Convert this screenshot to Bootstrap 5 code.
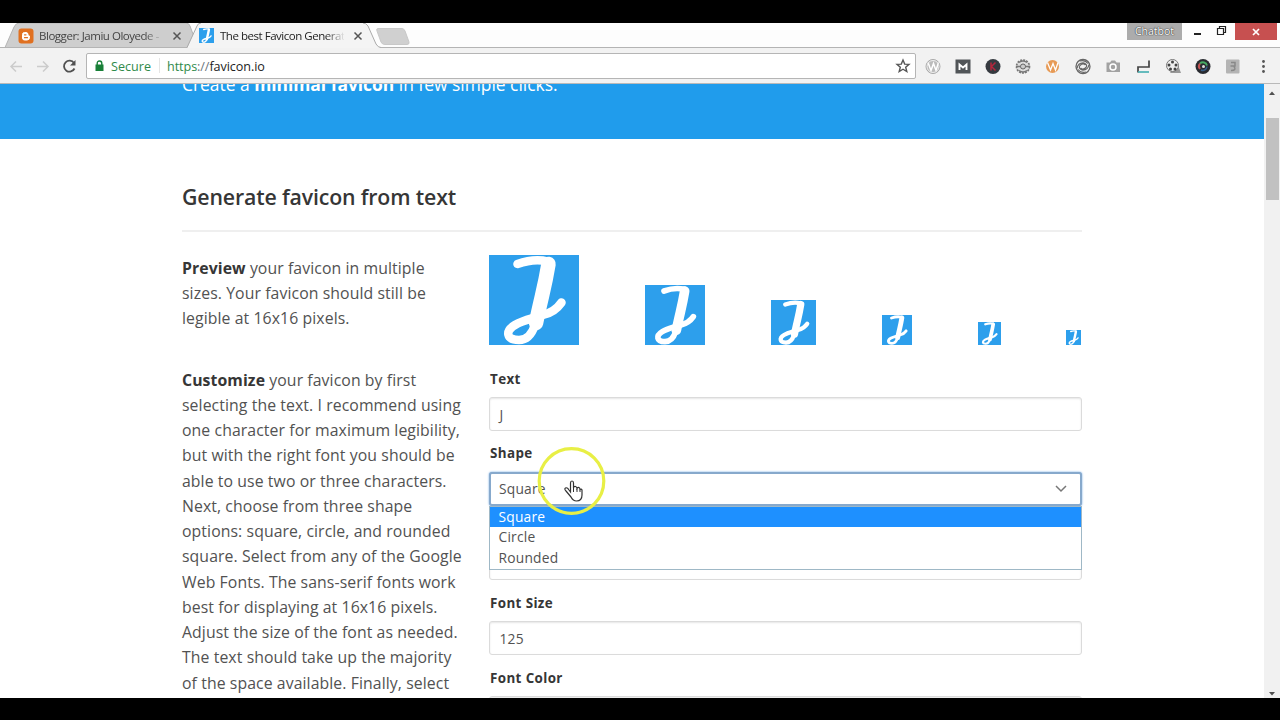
<!DOCTYPE html>
<html lang="en">
<head>
<meta charset="utf-8">
<meta name="viewport" content="width=device-width, initial-scale=1">
<title>favicon.io</title>
<link href="https://cdn.jsdelivr.net/npm/bootstrap@5.3.0/dist/css/bootstrap.min.css" rel="stylesheet">
<style>
body{height:720px;background:#000;padding:23px 0 22px;font-family:"Open Sans","Noto Sans",sans-serif;color:#525252}
.strip{height:25px;background:#fdfdfd;font-size:11.5px;color:#444}
.tabs-bg{left:0;top:0}
.tab-item{height:25px}
.t1{margin-left:18px;width:180px}
.t2{width:180px}
.tab-label{letter-spacing:-.47px;white-space:nowrap;overflow:hidden;line-height:25px;width:125px;padding-left:1px}
.t1 .tab-label{-webkit-mask-image:linear-gradient(90deg,#000 85%,transparent)}
.t2 .tab-label{-webkit-mask-image:linear-gradient(90deg,#000 85%,transparent 101%);color:#222}
.userchip{width:55px;height:17px;background:#acacac;color:#fff;font-size:10.5px;line-height:16px;text-shadow:0 0 1px #444,0 0 1px #444,0 0 1px #444}
.closebtn{width:42px;height:17px;background:#c75050;margin-right:3px}
.tools{height:35.5px;background:#f2f2f2;border-bottom:1px solid #b9b9b9;padding-top:1px}
.addr{width:830px;height:26px;margin-left:8px;border:1px solid #b5b5b5;border-radius:2px;background:#fff;font-size:12.6px;line-height:17px;color:#222}
.green{color:#2f8a4a}
.sec{margin:0 0 0 7px;width:43px;padding-top:2px}
.bar{height:15px;align-self:center!important;color:#999;margin-left:5px}
.url{margin-left:7px;letter-spacing:-.07px;padding-top:2px}
.pagearea{height:614.5px;background:#fff}
.hero{height:55px;background:#209cec;color:#fff;font-size:17.4px;line-height:28px}
.hero div{margin:-14px 0 0 182px;white-space:nowrap}
.content-col{margin-left:182px;width:899.5px}
h1.ttl{font-size:21.3px;line-height:28px;font-weight:600;color:#363636;margin:44.5px 0 0;letter-spacing:-.15px}
.rule{height:2px;background:#efefef;margin:19px 0 22.800px}
.left{width:307px;font-size:15.8px;line-height:25.25px;letter-spacing:.085px;padding-top:1px}
.left p span{display:block;white-space:nowrap}
.left b{color:#363636}
.cust{margin-top:36px}
.right{width:592.5px}
.pv{height:90px;margin-bottom:24px}
.lbl{font-size:13.4px;letter-spacing:.38px;font-weight:700;color:#363636;line-height:20px;height:24px;margin:0 0 4.200px 1px}
.field{height:34px;border:1px solid #dbdbdb;border-radius:3px;box-shadow:inset 0 1px 2px #0a0a0a1a;font-size:13.8px;letter-spacing:.2px;line-height:33px;padding-left:9.5px;margin-bottom:12.5px;background:#fff}
.field.on{border:2px solid #87a9cc;box-shadow:0 0 2px #5a9de0;padding-left:8px;line-height:30px}
.chev{margin-right:13px}
.menu{top:34px;left:0;right:0;height:64px;border:1px solid #9fb8c6;background:#fff;font-size:13.8px;letter-spacing:.2px;line-height:20.5px;z-index:2}
.menu div{padding-left:8.5px;height:20.5px}
.menu .sel{background:#1e90ff;color:#fff}
.sb{width:16px;background:#f1f1f1}
.thumb{height:82px;margin:17.5px 1px 0 2px;background:#c1c1c1}
.ring{left:48px;top:-26px;z-index:3}
</style>
</head>
<body class="overflow-hidden">
<svg width="0" height="0" class="position-absolute"><defs>
<symbol id="fav" viewBox="0 0 90 90"><rect width="90" height="90" fill="#2d9fec"/><g fill="none" stroke="#fff" stroke-linecap="round" stroke-linejoin="round"><path d="M28.500 9Q45 3 59 6.500" stroke-width="8.500"/><path d="M59.500 9Q57 24 53 41T47 68" stroke-width="14.500"/><path d="M46 70Q41 85 30 85C17 85 16 76 26 70C34 65 42 64 54 60Q66 57 72.500 47.500" stroke-width="8.500"/></g></symbol>
</defs></svg>
<header>
<div class="strip d-flex position-relative">
<svg class="position-absolute tabs-bg" width="1280" height="25"><path d="M0 24.500H1280" stroke="#b4b4b4"/><path d="M5 24.500L14 4Q16 0 19 0H186Q189 0 190 3L198 24.500Z" fill="#cecece" stroke="#b4b4b4"/><path d="M187 25.500L197 3Q198 0 201 0H363Q366 0 368 3L376 21Q378 24.500 381 24.500V26H187Z" fill="#f4f4f4"/><path d="M187 24.500L197 3Q198 0 201 0M363 0Q366 0 368 3L376 21Q378 24.500 381 24.500" fill="none" stroke="#aaa"/><path d="M378 5.500H402Q404 5.500 405 8L409 19Q409.500 21.500 407 21.500H385Q382 21.500 381 19L377 8Q376 5.500 378 5.500Z" fill="#d0d0d0" stroke="#c8c8c8"/></svg>
<div class="tab-item t1 d-flex align-items-center position-relative">
<svg width="16" height="16" viewBox="0 0 16 16"><rect x=".5" y=".5" width="15" height="15" rx="3" fill="#e07020"/><path d="M6.500 4.500H8Q10 4.500 10 6.500Q10 7.500 11.500 8V9.500Q11.500 12 9 12H6.500Q4.500 12 4.500 10V6.500Q4.500 4.500 6.500 4.500Z" fill="#fff" stroke="#fff"/><path d="M6.500 6.800H8M6.500 9.700H9.500" stroke="#e07020" stroke-width="1.200" stroke-linecap="round"/></svg>
<span class="tab-label ms-1">Blogger: Jamiu Oloyede -</span>
<svg class="ms-2" width="12" height="12"><path d="M2.500 2.500L9.500 9.500M9.500 2.500L2.500 9.500" stroke="#555" stroke-width="1.500"/></svg>
</div>
<div class="tab-item t2 d-flex align-items-center position-relative">
<svg width="17" height="15"><use href="#fav" width="17" height="15"/></svg>
<span class="tab-label ms-1">The best Favicon Generat</span>
<svg class="ms-2" width="12" height="12"><path d="M2.500 2.500L9.500 9.500M9.500 2.500L2.500 9.500" stroke="#555" stroke-width="1.500"/></svg>
</div>
<div class="ms-auto d-flex position-relative">
<div class="userchip text-center">Chatbot</div>
<svg width="53" height="17"><path d="M12 11H19" stroke="#222" stroke-width="2"/><path d="M35.500 5.500H41.500V11.500H35.500ZM37.500 5V3.500H43.500V9.500H42" fill="none" stroke="#222" stroke-width="1.200"/></svg>
<div class="closebtn d-flex align-items-center justify-content-center"><svg width="8" height="8"><path d="M1 1L7 7M7 1L1 7" stroke="#fff" stroke-width="1.700"/></svg></div>
</div>
</div>
<div class="tools d-flex align-items-center">
<svg class="flex-shrink-0" width="78" height="34" fill="none"><path d="M22 17.500H11M16 12.500L11 17.500L16 22.500M37 17.500H48M43 12.500L48 17.500L43 22.500" stroke="#ccc" stroke-width="1.500"/><path d="M74 14A5.500 5.500 0 1 0 74.500 19.500" stroke="#505050" stroke-width="1.800"/><path d="M75.500 11V16.500H70Z" fill="#505050"/></svg>
<div class="addr d-flex align-items-center flex-shrink-0">
<svg width="9" height="12" class="ms-2"><rect x=".5" y="4.500" width="8" height="6.500" fill="#188038"/><path d="M2.200 5V3.500Q2.200 1 4.500 1T6.800 3.500V5" fill="none" stroke="#188038" stroke-width="1.400"/></svg>
<span class="green sec">Secure</span><span class="vr bar"></span><span class="url"><span class="green">https</span><span class="text-secondary">://</span>favicon.io</span>
<svg class="ms-auto me-1" width="16" height="16"><path d="M8 2L9.700 6.100L14 6.400L10.700 9.200L11.800 13.500L8 11.200L4.200 13.500L5.300 9.200L2 6.400L6.300 6.100Z" fill="none" stroke="#555" stroke-width="1.400"/></svg>
</div>
<svg class="flex-shrink-0" width="363" height="34" viewBox="-1 0.500 363 34" fill="none">
<circle cx="16" cy="18" r="7" fill="#bbb" stroke="#aaa"/><path d="M11 14L14 22L16.500 15L19 22L21.500 14" stroke="#fff" stroke-width="1.500"/><circle cx="16" cy="18" r="6" stroke="#eee"/>
<rect x="38.500" y="11" width="15" height="14" fill="#515558"/><path d="M42.500 21.500V16L46 19L49.500 16V21.500" stroke="#fff" stroke-width="1.900"/>
<circle cx="76" cy="18" r="7.500" fill="#353a40"/><path d="M74 14V22M78.500 14L74.500 18L78.500 22" stroke="#b5273d" stroke-width="1.500"/>
<circle cx="106" cy="18" r="6.500" fill="#ddd" stroke="#777" stroke-width="1.700" stroke-dasharray="2 1"/><path d="M99 18H113M102 14Q106 11 110 14M102 22Q106 25 110 22" stroke="#777" stroke-width="1.400"/><circle cx="106" cy="18" r="2.500" stroke="#666" fill="#ccc"/>
<circle cx="135.500" cy="18" r="6.500" fill="#e79a55"/><path d="M130.500 14L133.500 21.500L136 15L138.500 21.500L141 14" stroke="#fff" stroke-width="1.300"/>
<circle cx="166" cy="18" r="7" stroke="#666" stroke-width="1.300"/><path d="M160 20Q161 14 167 14.500Q171 16 169 19Q166 22 163.500 19.500M172 16Q171 22 165 21.500Q161 20 163 17Q166 14 168.500 16.500M163 12.500Q168 11 171 15M169 23.500Q164 25 161 21" stroke="#666" stroke-width="1.200"/>
<path d="M189.500 14H193L194.500 12H198L199.500 14H203V23.500H189.500Z" fill="#a2a2a2"/><circle cx="196" cy="18.500" r="3" stroke="#fff" stroke-width="1.500"/>
<path d="M232 12V18.500H221V24" stroke="#444" stroke-width="1.700"/><path d="M221 23.500H232" stroke="#4cb2b4" stroke-width="1.700"/>
<path d="M253 24.500H264L260 14Z" fill="#999"/><circle cx="255.500" cy="17" r="6" fill="#eee" stroke="#777"/><g fill="#444"><circle cx="255.500" cy="13.500" r="1.500"/><circle cx="252" cy="16.500" r="1.500"/><circle cx="253.500" cy="20.500" r="1.500"/><circle cx="258" cy="20.500" r="1.500"/><circle cx="259" cy="16.500" r="1.500"/></g>
<circle cx="286" cy="18" r="7.500" fill="#292b30"/><path d="M283 15A4.200 4.200 0 0 1 290 17" stroke="#47aa62" stroke-width="1.900"/><path d="M283 15A4.200 4.200 0 0 0 283 20.500" stroke="#c65555" stroke-width="1.900"/><path d="M290 18A4.200 4.200 0 0 1 284 21.500" stroke="#375f8a" stroke-width="1.500"/><circle cx="286.500" cy="18" r="1.500" fill="#ddd"/>
<rect x="309" y="11" width="13.500" height="14" rx="1" fill="#b4b4b4"/><path d="M314 14H318V17.500H313.500M317 18Q320 22 314 22" stroke="#888" stroke-width="1.500"/>
<g fill="#555"><circle cx="346.500" cy="13" r="1.400"/><circle cx="346.500" cy="18" r="1.400"/><circle cx="346.500" cy="23" r="1.400"/></g>
</svg>
</div>
</header>
<div class="pagearea d-flex">
<main class="flex-grow-1 overflow-hidden">
<div class="hero overflow-hidden"><div>Create a <b>minimal favicon</b> in few simple clicks.</div></div>
<div class="content-col">
<h1 class="ttl">Generate favicon from text</h1>
<div class="rule"></div>
<div class="d-flex">
<div class="left flex-shrink-0">
<p class="mb-0"><span><b>Preview</b> your favicon in multiple</span><span>sizes. Your favicon should still be</span><span>legible at 16x16 pixels.</span></p>
<p class="mb-0 cust"><span><b>Customize</b> your favicon by first</span><span>selecting the text. I recommend using</span><span>one character for maximum legibility,</span><span>but with the right font you should be</span><span>able to use two or three characters.</span><span>Next, choose from three shape</span><span>options: square, circle, and rounded</span><span>square. Select from any of the Google</span><span>Web Fonts. The sans-serif fonts work</span><span>best for displaying at 16x16 pixels.</span><span>Adjust the size of the font as needed.</span><span>The text should take up the majority</span><span>of the space available. Finally, select</span></p>
</div>
<div class="right">
<div class="d-flex justify-content-between align-items-end pv">
<svg width="90" height="90"><use href="#fav"/></svg><svg width="60" height="60"><use href="#fav"/></svg><svg width="45" height="45"><use href="#fav"/></svg><svg width="30" height="30"><use href="#fav"/></svg><svg width="23" height="23"><use href="#fav"/></svg><svg width="15" height="15"><use href="#fav"/></svg>
</div>
<div class="lbl">Text</div><div class="field">J</div>
<div class="lbl">Shape</div>
<div class="position-relative">
<div class="field on d-flex justify-content-between align-items-center"><span>Square</span><svg width="12" height="8" class="chev"><path d="M1 1L6 6L11 1" fill="none" stroke="#777" stroke-width="1.500"/></svg></div>
<div class="menu position-absolute"><div class="sel">Square</div><div>Circle</div><div>Rounded</div></div>
<svg class="ring position-absolute" width="70" height="70"><circle cx="34.500" cy="35" r="32.300" fill="none" stroke="#e8ef45" stroke-width="3.200"/><path d="M35 51L30 45Q28 43 29.500 42Q31 41 33 44L34.500 46V37Q34.500 35 36 35T37.500 37V42Q38 40 39.500 40.500T41 42.500Q42 41 43 41.500T44 43.500Q45.500 42.500 46 44V49Q46 55 40.500 55Q37 55 35 51Z" transform="translate(-1 0)" fill="#fff" stroke="#333" stroke-width="1.200"/><path d="M36.500 42V46M40 43V46M43 44V46" stroke="#333"/></svg>
</div>
<div class="lbl">Font</div><div class="field"></div>
<div class="lbl">Font Size</div><div class="field">125</div>
<div class="lbl">Font Color</div><div class="field"></div>
</div>
</div>
</div>
</main>
<aside class="sb d-flex flex-column"><svg width="16" height="17" class="flex-shrink-0"><path d="M5 11L8 7.500L11 11Z" fill="#505050"/></svg><div class="thumb flex-shrink-0"></div><svg width="16" height="10" class="mt-auto"><path d="M5 4L8 7.500L11 4Z" fill="#505050"/></svg></aside>
</div>
<script src="https://cdn.jsdelivr.net/npm/bootstrap@5.3.0/dist/js/bootstrap.bundle.min.js"></script>
</body>
</html>
